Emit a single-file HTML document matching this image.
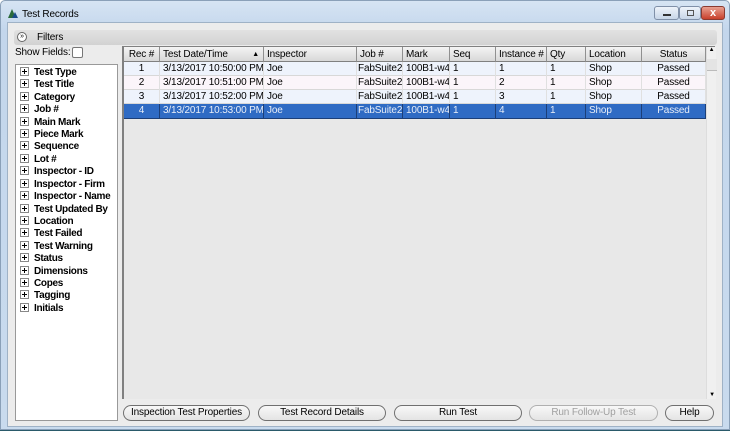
<!DOCTYPE html>
<html><head><style>
*{margin:0;padding:0;box-sizing:border-box}
body{width:730px;height:436px;overflow:hidden;background:#fff;font-family:"Liberation Sans",sans-serif;font-size:10px;letter-spacing:-0.15px;color:#000;position:relative}
.abs{position:absolute}
.win{left:0;top:0;width:730px;height:430px;background:linear-gradient(#d6e4f3,#c3d6ec 30px,#c9dbee);border:1px solid #8aa0b8;border-radius:5px 5px 0 0}
.client{left:7px;top:22px;width:716px;height:405px;background:#ececec;border:1px solid #9fb2c6}
.btn{position:absolute;top:405px;height:16px;border:1px solid #707070;border-radius:8px;background:linear-gradient(#f8f8f8,#e4e4e4);text-align:center;font-size:10px;line-height:14px;white-space:nowrap}
.grid{left:122px;top:46px;width:593px;height:353px;background:#e8e8e8;border-left:2px solid #808080;border-top:1px solid #808080}
.row{position:absolute;left:0;height:14px;width:582px;border-bottom:1px solid #d8d8d8}
.c{position:absolute;top:0;height:14px;line-height:14px;padding-left:3px;white-space:nowrap;overflow:hidden;border-right:1px solid #e0e0e0}
.hd .c{height:15px;line-height:15px;background:linear-gradient(#f4f4f4,#d8d8d8);border-right:1px solid #909090;border-bottom:1px solid #808080}
.sel .c{background:#2f6bc4;color:#e8eef8;border-right:1px solid #1c3f78}
.tree div{position:absolute;left:4px;font-weight:bold;font-size:10px;letter-spacing:-0.3px;white-space:nowrap}
.tree div:before{content:"";display:inline-block;width:7px;height:7px;border:1px solid #888;margin-right:5px;vertical-align:-1px;background:linear-gradient(#000,#000) center/5px 1px no-repeat,linear-gradient(#000,#000) center/1px 5px no-repeat,#fff}
</style></head><body>
<div class="abs" style="left:0;top:429px;width:730px;height:7px;background:#fff;border-top:2px solid #2a5a6a"></div>
<div class="abs win"></div>
<svg class="abs" style="left:7px;top:8px" width="12" height="11"><polygon points="1,10 5,1 9,10" fill="#2a6a3a"/><polygon points="5,10 8,4 11,10" fill="#1a4a8a"/></svg>
<div class="abs" style="left:22px;top:9px;font-size:10px">Test Records</div>
<div class="abs" style="left:654px;top:6px;width:25px;height:14px;border:1px solid #8090a8;border-radius:3px;background:linear-gradient(#eef3fa,#c8d6e8)"><div class="abs" style="left:8px;top:7px;width:8px;height:2px;background:#333"></div></div>
<div class="abs" style="left:679px;top:6px;width:22px;height:14px;border:1px solid #8090a8;border-radius:3px;background:linear-gradient(#eef3fa,#c8d6e8)"><div class="abs" style="left:7px;top:3px;width:7px;height:6px;border:1px solid #555"></div></div>
<div class="abs" style="left:701px;top:6px;width:24px;height:14px;border:1px solid #8a3a30;border-radius:3px;background:linear-gradient(#e8a090,#c8402c);color:#fff;font-weight:bold;text-align:center;line-height:12px;font-size:11px">x</div>
<div class="abs client"></div>
<div class="abs" style="left:14px;top:30px;width:703px;height:15px;background:linear-gradient(#e2e2e2,#d2d2d2);border-radius:3px"></div>
<div class="abs" style="left:17px;top:32px;width:10px;height:10px;border:1px solid #666;border-radius:50%;background:#fff;font-size:7px;line-height:8px;text-align:center">»</div>
<div class="abs" style="left:37px;top:32px">Filters</div>
<div class="abs" style="left:15px;top:47px">Show Fields:</div>
<div class="abs" style="left:72px;top:47px;width:11px;height:11px;border:1px solid #777;background:#fff;border-radius:2px"></div>
<div class="abs tree" style="left:15px;top:64px;width:103px;height:357px;background:#fff;border:1px solid #999">
<div style="top:2px">Test Type</div><div style="top:14px">Test Title</div><div style="top:27px">Category</div><div style="top:39px">Job #</div><div style="top:52px">Main Mark</div><div style="top:64px">Piece Mark</div><div style="top:76px">Sequence</div><div style="top:89px">Lot #</div><div style="top:101px">Inspector - ID</div><div style="top:114px">Inspector - Firm</div><div style="top:126px">Inspector - Name</div><div style="top:139px">Test Updated By</div><div style="top:151px">Location</div><div style="top:163px">Test Failed</div><div style="top:176px">Test Warning</div><div style="top:188px">Status</div><div style="top:201px">Dimensions</div><div style="top:213px">Copes</div><div style="top:225px">Tagging</div><div style="top:238px">Initials</div>
</div>
<div class="abs grid">
<div class="row hd" style="top:0;height:15px;border:0">
<div class="c" style="left:0;width:36px;text-align:center;padding:0">Rec #</div><div class="c" style="left:36px;width:104px">Test Date/Time<span style="position:absolute;right:4px;font-size:7px">▲</span></div><div class="c" style="left:140px;width:93px">Inspector</div><div class="c" style="left:233px;width:46px">Job #</div><div class="c" style="left:279px;width:47px">Mark</div><div class="c" style="left:326px;width:46px">Seq</div><div class="c" style="left:372px;width:51px">Instance #</div><div class="c" style="left:423px;width:39px">Qty</div><div class="c" style="left:462px;width:56px">Location</div><div class="c" style="left:518px;width:64px;text-align:center;padding:0">Status</div>
</div>
<div class="row" style="top:15px;background:#eef3fc"><div class="c" style="left:0;width:36px;text-align:center;padding:0">1</div><div class="c" style="left:36px;width:104px">3/13/2017 10:50:00 PM</div><div class="c" style="left:140px;width:93px">Joe</div><div class="c" style="left:233px;width:46px;padding-left:1px">FabSuite2</div><div class="c" style="left:279px;width:47px">100B1-w4</div><div class="c" style="left:326px;width:46px">1</div><div class="c" style="left:372px;width:51px">1</div><div class="c" style="left:423px;width:39px">1</div><div class="c" style="left:462px;width:56px">Shop</div><div class="c" style="left:518px;width:64px;text-align:center;padding:0">Passed</div></div>
<div class="row" style="top:29px;background:#fbf5fa"><div class="c" style="left:0;width:36px;text-align:center;padding:0">2</div><div class="c" style="left:36px;width:104px">3/13/2017 10:51:00 PM</div><div class="c" style="left:140px;width:93px">Joe</div><div class="c" style="left:233px;width:46px;padding-left:1px">FabSuite2</div><div class="c" style="left:279px;width:47px">100B1-w4</div><div class="c" style="left:326px;width:46px">1</div><div class="c" style="left:372px;width:51px">2</div><div class="c" style="left:423px;width:39px">1</div><div class="c" style="left:462px;width:56px">Shop</div><div class="c" style="left:518px;width:64px;text-align:center;padding:0">Passed</div></div>
<div class="row" style="top:43px;background:#eef3fc"><div class="c" style="left:0;width:36px;text-align:center;padding:0">3</div><div class="c" style="left:36px;width:104px">3/13/2017 10:52:00 PM</div><div class="c" style="left:140px;width:93px">Joe</div><div class="c" style="left:233px;width:46px;padding-left:1px">FabSuite2</div><div class="c" style="left:279px;width:47px">100B1-w4</div><div class="c" style="left:326px;width:46px">1</div><div class="c" style="left:372px;width:51px">3</div><div class="c" style="left:423px;width:39px">1</div><div class="c" style="left:462px;width:56px">Shop</div><div class="c" style="left:518px;width:64px;text-align:center;padding:0">Passed</div></div>
<div class="row sel" style="top:57px;height:15px;border-bottom:1px solid #1c3f78"><div class="c" style="left:0;width:36px;text-align:center;padding:0">4</div><div class="c" style="left:36px;width:104px">3/13/2017 10:53:00 PM</div><div class="c" style="left:140px;width:93px">Joe</div><div class="c" style="left:233px;width:46px;padding-left:1px">FabSuite2</div><div class="c" style="left:279px;width:47px">100B1-w4</div><div class="c" style="left:326px;width:46px">1</div><div class="c" style="left:372px;width:51px">4</div><div class="c" style="left:423px;width:39px">1</div><div class="c" style="left:462px;width:56px">Shop</div><div class="c" style="left:518px;width:64px;text-align:center;padding:0">Passed</div></div>
<div class="abs" style="left:582px;top:0;width:10px;height:352px;background:#f0f0f0;border-left:1px solid #ddd"><div style="font-size:6px;text-align:center">▲</div><div class="abs" style="left:0;top:12px;width:10px;height:12px;border-bottom:1px solid #bbb;background:#e4e4e4"></div><div class="abs" style="bottom:1px;width:10px;font-size:6px;text-align:center">▼</div></div>
</div>
<div class="btn" style="left:123px;width:127px">Inspection Test Properties</div>
<div class="btn" style="left:258px;width:128px">Test Record Details</div>
<div class="btn" style="left:394px;width:128px">Run Test</div>
<div class="btn" style="left:529px;width:129px;color:#a0a0a0;border-color:#b0b0b0">Run Follow-Up Test</div>
<div class="btn" style="left:665px;width:49px">Help</div>
</body></html>
